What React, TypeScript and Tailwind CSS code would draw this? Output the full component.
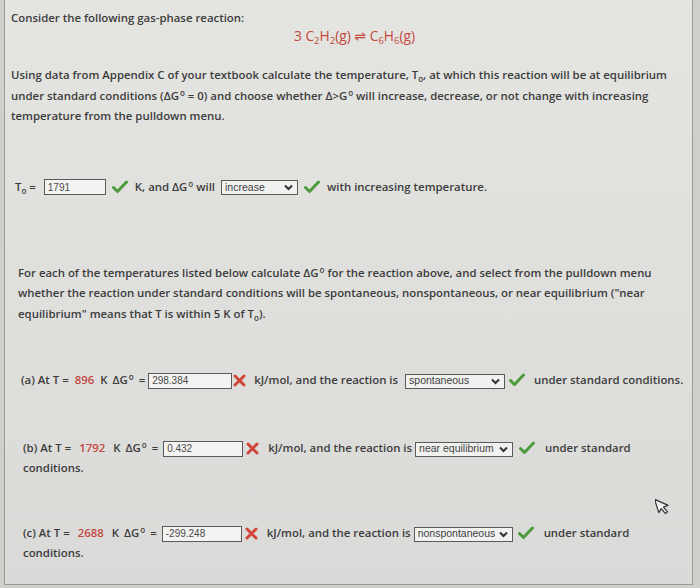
import React from "react";

const font = { fontFamily: "'Open Sans', 'DejaVu Sans', sans-serif" };

const Check = () => (
  <svg width="16" height="14" viewBox="0 0 16 14" className="shrink-0">
    <path d="M1.5 7.5 L5.5 11.5 L14.5 2" fill="none" stroke="#4b9b3c" strokeWidth="3" strokeLinecap="round" strokeLinejoin="round" />
  </svg>
);

const Cross = () => (
  <svg width="13" height="13" viewBox="0 0 13 13" className="shrink-0">
    <path d="M2 2 L11 11 M11 2 L2 11" fill="none" stroke="#d2453b" strokeWidth="3" strokeLinecap="round" />
  </svg>
);

const Box = ({ value, w }: { value: string; w: string }) => (
  <span className={`inline-flex items-center h-[16px] ${w} border border-[#5a5a5a] bg-[#f3f3f1] px-[3px] text-[10px] text-[#4a4a4a] font-normal shrink-0`} style={{ fontFamily: "'Liberation Sans', Arial, sans-serif" }}>
    {value}
  </span>
);

const Select = ({ value, w }: { value: string; w: string }) => (
  <span className={`inline-flex items-center justify-between h-[15px] ${w} border border-[#5a5a5a] bg-[#f1f1ef] pl-[3px] pr-[4px] text-[10.5px] text-[#3f3f3f] font-normal shrink-0`} style={{ fontFamily: "'Liberation Sans', Arial, sans-serif" }}>
    <span>{value}</span>
    <svg width="9" height="7" viewBox="0 0 9 7">
      <path d="M1 1.5 L4.5 5 L8 1.5" fill="none" stroke="#333" strokeWidth="2" />
    </svg>
  </span>
);

const Red = ({ children, mx = "mx-[6px]" }: { children: React.ReactNode; mx?: string }) => (
  <span className={`text-[#c4473d] ${mx}`}>{children}</span>
);

const Deg = () => <span className="relative top-[-4px] text-[8px] leading-none ml-[1px]">o</span>;

const G = () => (
  <span>
    ΔG<Deg />
  </span>
);

const Sub = ({ children, size = "text-[8px]" }: { children: React.ReactNode; size?: string }) => (
  <span className={`relative top-[3px] ${size} leading-none`}>{children}</span>
);

export default function App() {
  return (
    <div className="w-[700px] h-[588px] overflow-hidden bg-[#cfcfcc]" style={font}>
      <div className="relative ml-[4px] w-[689px] h-[585px] border-l border-r border-b border-[#9b9b98] bg-gradient-to-b from-[#e4e5e1] to-[#dadad8] text-[11.4px] font-semibold text-[#3c3c3c]">
        <div className="pt-[8px] pl-[6px]">
          <div className="leading-[20px]">Consider the following gas-phase reaction:</div>
          <div className="leading-[16px] text-center text-[#c4473d] font-normal text-[13.8px] pl-[6px]">
            3 C<Sub size="text-[9.5px]">2</Sub>H<Sub size="text-[9.5px]">2</Sub>(g) <span className="text-[14px] leading-none">⇌</span> C<Sub size="text-[9.5px]">6</Sub>H<Sub size="text-[9.5px]">6</Sub>(g)
          </div>

          <p className="mt-[21px] leading-[20.5px] pr-[12px]">
            Using data from Appendix C of your textbook calculate the temperature, T<Sub>o</Sub>, at which this reaction will be at equilibrium under standard conditions (<G /> = 0) and choose whether Δ&gt;G<Deg /> will increase, decrease, or not change with increasing temperature from the pulldown menu.
          </p>

          <div className="mt-[50px] h-[20px] flex items-center pl-[4px]">
            <span>T<Sub>o</Sub> =</span>
            <span className="ml-[8px]"><Box value="1791" w="w-[62px]" /></span>
            <span className="ml-[6px]"><Check /></span>
            <span className="ml-[7px]">K, and <G /> will</span>
            <span className="ml-[6px]"><Select value="increase" w="w-[77px]" /></span>
            <span className="ml-[6px]"><Check /></span>
            <span className="ml-[7px]">with increasing temperature.</span>
          </div>
        </div>

        <div className="pl-[13px]">
          <p className="mt-[66px] leading-[20.5px] pr-[30px]">
            For each of the temperatures listed below calculate <G /> for the reaction above, and select from the pulldown menu whether the reaction under standard conditions will be spontaneous, nonspontaneous, or near equilibrium ("near equilibrium" means that T is within 5 K of T<Sub>o</Sub>).
          </p>

          <div className="mt-[46px] h-[20px] flex items-center pl-[3px]">
            <span>(a) At T =</span><Red>896</Red><span className="[word-spacing:2px]">K <G /> =</span>
            <span className="ml-[3px]"><Box value="298.384" w="w-[84px]" /></span>
            <span className="ml-[1px]"><Cross /></span>
            <span className="ml-[8px]">kJ/mol, and the reaction is</span>
            <span className="ml-[7px]"><Select value="spontaneous" w="w-[100px]" /></span>
            <span className="ml-[4px]"><Check /></span>
            <span className="ml-[9px]">under standard conditions.</span>
          </div>

          <div className="mt-[48px] pl-[5px]">
            <div className="h-[20px] flex items-center">
              <span>(b) At T =</span><Red mx="mx-[8px]">1792</Red><span className="[word-spacing:2px]">K <G /> =</span>
              <span className="ml-[5px]"><Box value="0.432" w="w-[80px]" /></span>
              <span className="ml-[3px]"><Cross /></span>
              <span className="ml-[9px]">kJ/mol, and the reaction is</span>
              <span className="ml-[3px]"><Select value="near equilibrium" w="w-[98px]" /></span>
              <span className="ml-[6px]"><Check /></span>
              <span className="ml-[10px]">under standard</span>
            </div>
            <div className="leading-[20px]">conditions.</div>
          </div>

          <div className="mt-[45px] pl-[5px]">
            <div className="h-[20px] flex items-center">
              <span>(c) At T =</span><Red mx="mx-[8px]">2688</Red><span className="[word-spacing:2px]">K <G /> =</span>
              <span className="ml-[5px]"><Box value="-299.248" w="w-[80px]" /></span>
              <span className="ml-[3px]"><Cross /></span>
              <span className="ml-[9px]">kJ/mol, and the reaction is</span>
              <span className="ml-[3px]"><Select value="nonspontaneous" w="w-[99px]" /></span>
              <span className="ml-[5px]"><Check /></span>
              <span className="ml-[10px]">under standard</span>
            </div>
            <div className="leading-[20px]">conditions.</div>
          </div>
        </div>

        <svg className="absolute left-[650px] top-[496px]" width="18" height="20" viewBox="0 0 18 20">
          <path d="M2 1 L2 15 L5.5 12 L8 18 L10.5 17 L8 11 L13 11 Z" fill="#f4f4f2" stroke="#333" strokeWidth="1.2" strokeLinejoin="round" transform="rotate(-18 8 10)" />
        </svg>
      </div>
    </div>
  );
}
